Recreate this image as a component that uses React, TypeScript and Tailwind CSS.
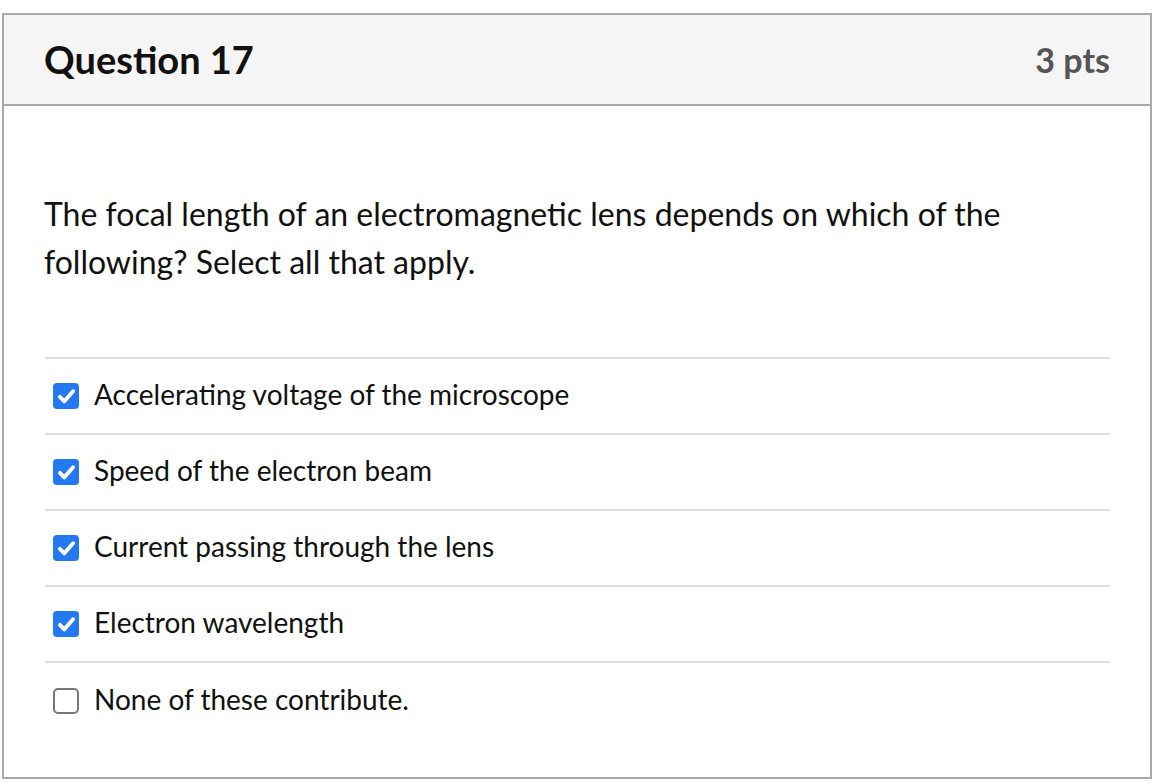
const answers = [
  { text: 'Accelerating voltage of the microscope', checked: true },
  { text: 'Speed of the electron beam', checked: true },
  { text: 'Current passing through the lens', checked: true },
  { text: 'Electron wavelength', checked: true },
  { text: 'None of these contribute.', checked: false },
];

function Box({ checked }: { checked: boolean }) {
  if (checked) {
    return (
      <span className="flex h-[26px] w-[26px] shrink-0 items-center justify-center rounded-[4px] bg-[#2478f0]">
        <svg viewBox="0 0 24 24" className="h-[21px] w-[21px]">
          <path d="M4.5 12.5 L9.5 17.5 L19.5 6" fill="none" stroke="white" strokeWidth="4.5" strokeLinecap="round" strokeLinejoin="round" />
        </svg>
      </span>
    );
  }
  return <span className="h-[26px] w-[26px] shrink-0 rounded-[5px] border-2 border-[#777] bg-white" />;
}

export default function App() {
  return (
    <div className="min-h-[782px] bg-white pt-[13px] pl-[2px] pr-[2px] font-['Lato',sans-serif] text-[#1b1b1b]">
      <div className="w-[1150px] border-2 border-[#a9a9a9]">
        {/* Header */}
        <div className="flex h-[91px] items-center justify-between border-b-2 border-[#a9a9a9] bg-[#f5f5f5] pl-[40px] pr-[40px]">
          <h2 className="text-[38px] font-bold text-[#111]">Question 17</h2>
          <span className="text-[34px] font-bold text-[#555]">3 pts</span>
        </div>

        {/* Body */}
        <div className="px-[40px] pt-[84px] pb-[38px]">
          <p className="text-[32px] leading-[48px] text-[#111]">
            The focal length of an electromagnetic lens depends on which of the following? Select all that apply.
          </p>

          <div className="mt-[71px] ml-[1px] border-t-2 border-[#dedede]">
            {answers.map((a, i) => (
              <label
                key={a.text}
                className={`flex h-[76px] items-center gap-[15px] pl-[8px] ${
                  i < answers.length - 1 ? 'border-b-2 border-[#dedede]' : ''
                }`}
              >
                <Box checked={a.checked} />
                <span className="mb-[4px] text-[28px] text-[#111]">{a.text}</span>
              </label>
            ))}
          </div>
        </div>
      </div>
    </div>
  );
}
